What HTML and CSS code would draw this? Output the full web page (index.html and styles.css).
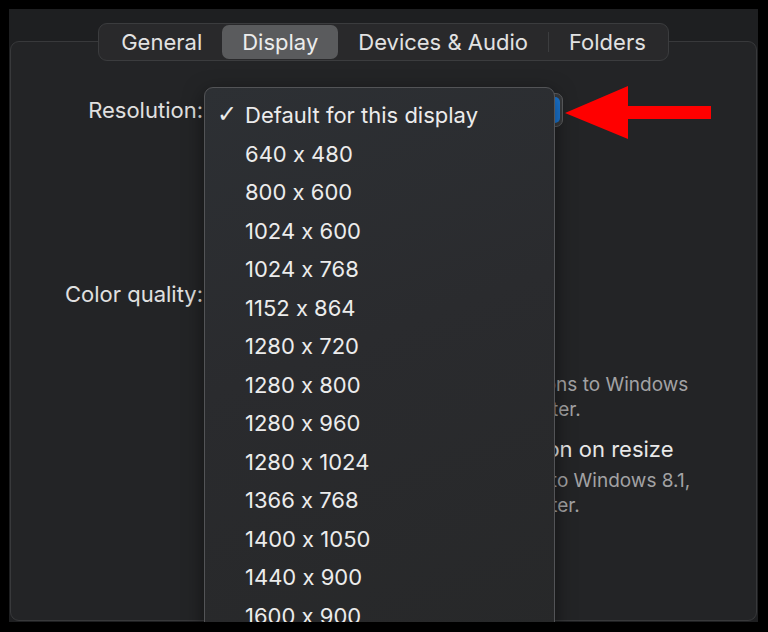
FILE: index.html
```html
<!DOCTYPE html>
<html lang="en">
<head>
    <meta charset="UTF-8">
    <title>Display settings</title>
    <link rel="stylesheet" href="styles.css">
</head>
<body>
    <div class="window">
        <div class="tabs">
            <div class="tab">General</div>
            <div class="tab active">Display</div>
            <div class="tab">Devices &amp; Audio</div>
            <div class="tab-sep"></div>
            <div class="tab">Folders</div>
        </div>

        <div class="panel">
            <div class="row row-resolution">
                <div class="label">Resolution:</div>
                <div class="popup">
                    <span class="popup-text">Default for this display</span>
                    <span class="popup-stepper"></span>
                </div>
            </div>

            <div class="row row-color">
                <div class="label">Color quality:</div>
                <div class="popup small">
                    <span class="popup-text">Best</span>
                    <span class="popup-stepper"></span>
                </div>
            </div>

            <div class="options">
                <div class="option-desc">
                    <div class="line">Applies the resolution options to Windows</div>
                    <div class="line">Vista, Server 2008 R2 or later.</div>
                </div>
                <div class="option-title">Always update resolution on resize</div>
                <div class="option-desc">
                    <div class="line">Automatically applies only to Windows 8.1,</div>
                    <div class="line">Windows Server 2012 or later.</div>
                </div>
            </div>

            <ul class="menu">
                <li class="checked">Default for this display</li>
                <li>640 x 480</li>
                <li>800 x 600</li>
                <li>1024 x 600</li>
                <li>1024 x 768</li>
                <li>1152 x 864</li>
                <li>1280 x 720</li>
                <li>1280 x 800</li>
                <li>1280 x 960</li>
                <li>1280 x 1024</li>
                <li>1366 x 768</li>
                <li>1400 x 1050</li>
                <li>1440 x 900</li>
                <li>1600 x 900</li>
                <li>1680 x 1050</li>
            </ul>

            <svg class="arrow" width="150" height="56" viewBox="0 0 150 56">
                <polygon points="0,27 63,0 63,20 146,20 146,33 63,33 63,53" fill="#ff0000"/>
            </svg>
        </div>
    </div>
</body>
</html>
```

FILE: styles.css
```css
* {
    margin: 0;
    padding: 0;
    box-sizing: border-box;
}

body {
    background-color: #000;
    font-family: 'Inter', 'Liberation Sans', sans-serif;
    font-feature-settings: "calt" 0;
    color: #e4e4e4;
    width: 768px;
    height: 632px;
    overflow: hidden;
}

.window {
    margin: 9px 0 0 9px;
    width: 749px;
    height: 613px;
    background-color: #1e1f21;
    padding: 14px 1px 1px 1px;
    display: flex;
    flex-direction: column;
    overflow: hidden;
}

.tabs {
    align-self: center;
    position: relative;
    z-index: 2;
    display: flex;
    align-items: center;
    height: 38px;
    padding: 0 2px;
    margin-bottom: -20px;
    background-color: #29292b;
    border: 1px solid #3b3c3e;
    border-radius: 9px;
}

.tab {
    font-size: 22px;
    color: #e2e2e2;
    padding: 0 20px;
    height: 34px;
    line-height: 34px;
    border-radius: 7px;
}

.tab.active {
    background-color: #5a5b5d;
    color: #ececec;
}

.tab-sep {
    width: 1px;
    height: 20px;
    background-color: #3c3d3f;
}

.panel {
    flex: 1;
    position: relative;
    background-color: #232426;
    border: 1px solid #38393b;
    border-radius: 9px;
    padding-top: 51px;
}

.row {
    display: flex;
    align-items: center;
}

.label {
    width: 192px;
    text-align: right;
    font-size: 22px;
    color: #e0e0e0;
}

.popup {
    margin-left: 8px;
    width: 352px;
    height: 34px;
    border: 1px solid #5d5e60;
    border-radius: 7px;
    background-color: #3a3b3d;
    display: flex;
    align-items: center;
    justify-content: space-between;
    padding: 3px 2px 3px 12px;
    font-size: 18px;
}

.popup.small {
    width: 200px;
}

.popup-stepper {
    width: 5px;
    height: 100%;
    background-color: #1b78d6;
    border-radius: 0 5px 5px 0;
}

.row-color {
    margin-top: 150px;
}

.options {
    margin-left: 300px;
    margin-top: 61px;
}

.option-desc {
    font-size: 19px;
    line-height: 25px;
    color: #a2a2a4;
}

.option-title {
    font-size: 22px;
    color: #e8e8e8;
    margin: 14px 0 6px;
}

.menu {
    position: absolute;
    left: 193px;
    top: 45px;
    width: 351px;
    height: 560px;
    list-style: none;
    padding-top: 8px;
    background: linear-gradient(160deg, #2d3034 0%, #2a2b2e 45%, #272829 100%);
    border: 1px solid #535457;
    border-radius: 9px;
    box-shadow: 0 6px 20px rgba(0, 0, 0, 0.5);
    z-index: 3;
}

.menu li {
    height: 38.5px;
    line-height: 38.5px;
    padding-left: 40px;
    font-size: 22px;
    color: #ececec;
    position: relative;
}

.menu li.checked::before {
    content: "\2713";
    position: absolute;
    left: 12px;
    top: -1px;
    font-family: 'DejaVu Sans', sans-serif;
    font-size: 24px;
    font-weight: bold;
}

.arrow {
    position: absolute;
    left: 554px;
    top: 44px;
    z-index: 4;
}
```
